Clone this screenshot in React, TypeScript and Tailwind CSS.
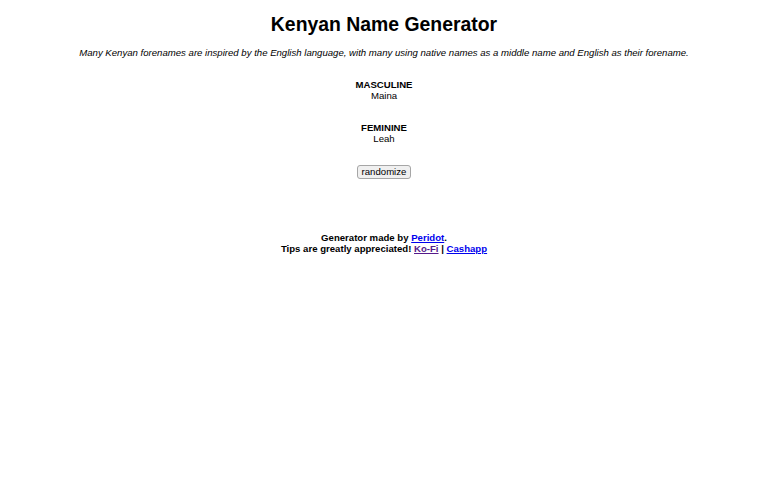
import React, { useState } from 'react';

const masculine = ['Maina', 'Kamau', 'Otieno', 'Mwangi', 'Kipchoge', 'Ochieng'];
const feminine = ['Leah', 'Wanjiru', 'Achieng', 'Njeri', 'Akinyi', 'Wambui'];

const pick = (list: string[]) => list[Math.floor(Math.random() * list.length)];

const App = () => {
  const [male, setMale] = useState('Maina');
  const [female, setFemale] = useState('Leah');

  return (
    <div className="min-h-screen bg-white text-black font-['Liberation_Sans',Arial,sans-serif] text-center">
      {/* Header */}
      <h1 className="pt-[13px] text-[19.4px] leading-[22px] font-bold">Kenyan Name Generator</h1>
      <p className="mt-[12px] text-[9.6px] leading-[12px] italic">
        Many Kenyan forenames are inspired by the English language, with many using native names as a middle name and English as their forename.
      </p>

      {/* Names */}
      <div className="mt-[20px] text-[9.6px] leading-[11px]">
        <div className="font-bold">MASCULINE</div>
        <div>{male}</div>
      </div>
      <div className="mt-[21px] text-[9.6px] leading-[11px]">
        <div className="font-bold">FEMININE</div>
        <div>{female}</div>
      </div>

      <button
        onClick={() => {
          setMale(pick(masculine));
          setFemale(pick(feminine));
        }}
        className="mt-[21px] px-[4px] h-[14px] text-[9.6px] leading-[12px] bg-[#f0f0f0] border border-[#a6a6a6] rounded-[3px]"
      >
        randomize
      </button>

      {/* Credits */}
      <div className="mt-[50px] text-[9.6px] leading-[11px] font-bold">
        <div>
          Generator made by <a href="#" className="text-[#0000ee] underline">Peridot</a>.
        </div>
        <div>
          Tips are greatly appreciated! <a href="#" className="text-[#551a8b] underline">Ko-Fi</a> |{' '}
          <a href="#" className="text-[#0000ee] underline">Cashapp</a>
        </div>
      </div>
    </div>
  );
};

export default App;
